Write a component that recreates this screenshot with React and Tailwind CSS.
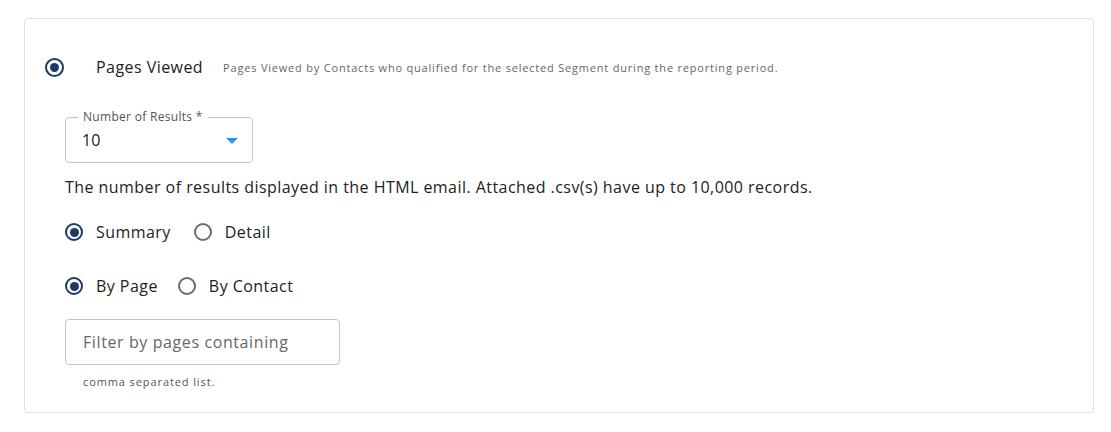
import React, { useState } from "react";

function Radio({ checked, onClick, label, big }) {
  return (
    <button
      type="button"
      onClick={onClick}
      className="flex items-center gap-[13px] text-[16px] tracking-[0.45px] text-[#222] leading-none"
    >
      <span
        className={`flex items-center justify-center rounded-full border-2 ${
          big ? "w-[19px] h-[19px]" : "w-[18px] h-[18px]"
        } ${checked ? "border-[#1c3a62]" : "border-[#6b6b6b]"}`}
      >
        {checked && <span className="w-[9px] h-[9px] rounded-full bg-[#1c3a62]" />}
      </span>
      {label && <span>{label}</span>}
    </button>
  );
}

export default function App() {
  const [mode, setMode] = useState("summary");
  const [group, setGroup] = useState("page");

  return (
    <div
      className="w-[1111px] h-[432px] bg-white pl-6 pr-[17px] pt-[18px]"
      style={{ fontFamily: "'Open Sans', 'Liberation Sans', sans-serif" }}
    >
      <div className="h-[395px] border border-[#e0e0e0] rounded-[4px] pl-[20px] pt-[38px]">
        {/* Section header */}
        <div className="flex items-center h-[20px]">
          <Radio checked big />
          <span className="ml-[32px] text-[16px] tracking-[0.45px] text-[#222]">Pages Viewed</span>
          <span className="ml-[20px] text-[11px] tracking-[0.8px] text-[#666] pt-[2px]">
            Pages Viewed by Contacts who qualified for the selected Segment during the reporting period.
          </span>
        </div>

        <div className="pl-[20px] pt-[40px]">
          {/* Number of results select */}
          <div className="relative w-[188px] h-[46px] border border-[#c4c4c4] rounded-[4px] flex items-center justify-between pl-[16px] pr-[14px]">
            <span className="absolute -top-[8px] left-[12px] bg-white px-[5px] text-[12px] tracking-[0.3px] leading-[14px] text-[#555]">
              Number of Results *
            </span>
            <span className="text-[16px] text-[#222]">10</span>
            <svg width="12" height="6" viewBox="0 0 12 6" className="mt-[1px]">
              <path d="M0 0h12L6 6z" fill="#2196f3" />
            </svg>
          </div>

          <p className="mt-[14px] text-[16px] tracking-[0.45px] text-[#222] leading-[20px]">
            The number of results displayed in the HTML email. Attached .csv(s) have up to 10,000 records.
          </p>

          <div className="mt-[26px] flex items-center gap-[23px]">
            <Radio checked={mode === "summary"} onClick={() => setMode("summary")} label="Summary" />
            <Radio checked={mode === "detail"} onClick={() => setMode("detail")} label="Detail" />
          </div>

          <div className="mt-[36px] flex items-center gap-[20px]">
            <Radio checked={group === "page"} onClick={() => setGroup("page")} label="By Page" />
            <Radio checked={group === "contact"} onClick={() => setGroup("contact")} label="By Contact" />
          </div>

          <div className="mt-[24px] w-[275px] h-[46px] border border-[#c4c4c4] rounded-[4px] flex items-center px-[17px]">
            <input
              className="w-full outline-none text-[16px] tracking-[0.6px] text-[#222] placeholder-[#666] bg-transparent"
              placeholder="Filter by pages containing"
              style={{ fontFamily: "inherit" }}
            />
          </div>
          <p className="mt-[9px] pl-[18px] text-[11px] tracking-[0.9px] text-[#555]">comma separated list.</p>
        </div>
      </div>
    </div>
  );
}
